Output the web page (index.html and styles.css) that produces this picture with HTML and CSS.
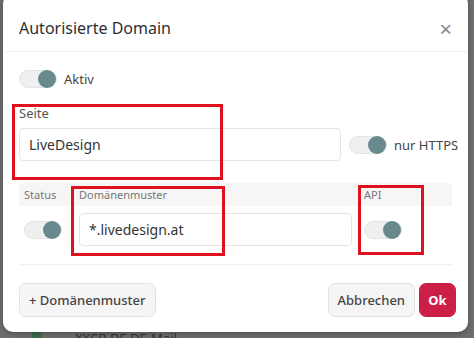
FILE: index.html
```html
<!DOCTYPE html>
<html lang="de">
<head>
  <meta charset="UTF-8">
  <title>Autorisierte Domain</title>
  <link rel="stylesheet" href="styles.css">
</head>
<body>
  <div class="modal">
    <div class="modal-header">
      <h2>Autorisierte Domain</h2>
      <span class="close">&times;</span>
    </div>

    <div class="modal-body">
      <div class="switch-row">
        <span class="switch"></span>
        <span>Aktiv</span>
      </div>

      <label class="field-label">Seite</label>
      <div class="site-row">
        <div class="input site-input">LiveDesign</div>
        <div class="switch-row">
          <span class="switch"></span>
          <span>nur HTTPS</span>
        </div>
      </div>

      <div class="table-head">
        <span class="col-status">Status</span>
        <span class="col-pattern">Domänenmuster</span>
        <span class="col-api">API</span>
      </div>
      <div class="table-row">
        <span class="col-status"><span class="switch"></span></span>
        <span class="col-pattern"><div class="input">*.livedesign.at</div></span>
        <span class="col-api"><span class="switch"></span></span>
      </div>
    </div>

    <div class="modal-footer">
      <button class="btn">+ Domänenmuster</button>
      <div class="footer-right">
        <button class="btn">Abbrechen</button>
        <button class="btn btn-ok">Ok</button>
      </div>
    </div>

    <!-- annotation frames -->
    <div class="mark mark-site"></div>
    <div class="mark mark-pattern"></div>
    <div class="mark mark-api"></div>
  </div>

  <div class="behind">
    <span class="behind-icon"></span>
    <span>XXCB DE DE-Mail</span>
  </div>
</body>
</html>
```

FILE: styles.css
```css
body {
  margin: 0;
  background: #6f6f6f;
  font-family: 'Noto Sans', sans-serif;
  color: #333;
  overflow: hidden;
}

.modal {
  position: relative;
  margin: -6px 0 0 3px;
  width: 465px;
  background: #fff;
  border-radius: 10px;
  box-shadow: 0 2px 6px rgba(0,0,0,0.3);
}

.modal-header {
  display: flex;
  align-items: center;
  justify-content: space-between;
  height: 58px;
  padding: 10px 16px 0 16px;
  box-sizing: border-box;
  border-bottom: 1px solid #f0f0f0;
}

.modal-header h2 {
  margin: 0;
  font-size: 16px;
  font-weight: 400;
  color: #2f2f2f;
}

.close {
  font-size: 22px;
  color: #888;
  line-height: 1;
}

.modal-body {
  padding: 18px 16px 0 16px;
}

.switch-row {
  display: flex;
  align-items: center;
  gap: 7px;
  font-size: 13px;
  color: #444;
  white-space: nowrap;
  flex-shrink: 0;
}

.switch {
  position: relative;
  display: inline-block;
  width: 36px;
  height: 16px;
  border-radius: 9px;
  background: #eef0f0;
  border: 1px solid #e2e4e4;
}

.switch::after {
  content: "";
  position: absolute;
  right: 0;
  top: -1px;
  width: 18px;
  height: 18px;
  border-radius: 50%;
  background: #688a8e;
}

.field-label {
  display: block;
  margin-top: 16px;
  font-size: 13px;
  color: #555;
}

.site-row {
  display: flex;
  align-items: center;
  gap: 8px;
  margin-top: 6px;
}

.input {
  height: 33px;
  box-sizing: border-box;
  border: 1px solid #e4e4e4;
  border-radius: 4px;
  padding: 0 9px;
  display: flex;
  align-items: center;
  font-size: 14px;
  color: #333;
}

.site-input {
  width: 322px;
  flex-shrink: 0;
}

.table-head,
.table-row {
  display: flex;
}

.table-head {
  align-items: center;
  margin-top: 22px;
  height: 23px;
  background: #f6f6f6;
  border-radius: 4px 0 0 0;
  font-size: 11px;
  color: #777;
}

.table-row {
  align-items: flex-start;
  height: 59px;
  padding-top: 7px;
  box-sizing: border-box;
  border-bottom: 1px solid #f0f0f0;
}

.table-row > span {
  height: 33px;
  align-items: center;
}

.col-status {
  width: 56px;
  padding-left: 5px;
  box-sizing: border-box;
  display: flex;
}

.col-pattern {
  width: 285px;
  padding-left: 4px;
  box-sizing: border-box;
}

.col-pattern .input {
  width: 273px;
}

.col-api {
  padding-left: 4px;
  display: flex;
}

.modal-footer {
  display: flex;
  justify-content: space-between;
  align-items: center;
  padding: 18px 12px 15px 16px;
}

.footer-right {
  display: flex;
  gap: 4px;
}

.btn {
  height: 34px;
  padding: 0 9px;
  font-family: 'Noto Sans', sans-serif;
  font-size: 13px;
  font-weight: 500;
  color: #444;
  background: #f5f5f5;
  border: 1px solid #e2e2e2;
  border-radius: 7px;
}

.btn-ok {
  width: 37px;
  padding: 0;
  background: #cc1f48;
  border-color: #cc1f48;
  color: #fff;
  font-weight: 700;
}

.mark {
  position: absolute;
  border: 3px solid #e0111f;
  box-sizing: border-box;
}

.mark-site {
  left: 9px;
  top: 110px;
  width: 211px;
  height: 76px;
}

.mark-pattern {
  left: 68px;
  top: 192px;
  width: 154px;
  height: 70px;
}

.mark-api {
  left: 355px;
  top: 191px;
  width: 66px;
  height: 70px;
}

.behind {
  display: flex;
  align-items: flex-start;
  gap: 33px;
  height: 10px;
  margin-left: 32px;
  font-size: 13px;
  color: #333;
  line-height: 1;
}

.behind-icon {
  width: 10px;
  height: 8px;
  background: #3f6f4f;
}
```
